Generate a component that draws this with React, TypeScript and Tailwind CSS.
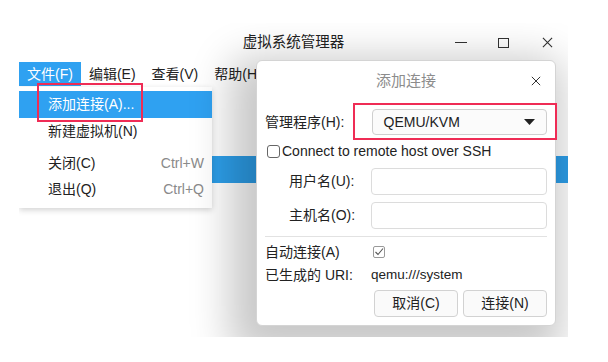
import React from 'react';

const cjk = { fontFamily: '"Liberation Sans", "Noto Sans CJK SC", sans-serif' };

const XIcon = ({ size = 12 }: { size?: number }) => (
  <svg width={size} height={size} viewBox="0 0 12 12" fill="none" stroke="#333" strokeWidth="1.2">
    <path d="M1 1 L11 11 M11 1 L1 11" />
  </svg>
);

const MenuItem = ({ label, shortcut, active }: { label: string; shortcut?: string; active?: boolean }) => (
  <div
    className={`h-[26px] flex items-center justify-between pl-[29px] pr-[8px] ${
      active ? 'bg-[#2fa1f1] text-white h-[27px]' : 'text-[#222]'
    }`}
  >
    <span>{label}</span>
    {shortcut && <span className="text-[#8a8a8a]">{shortcut}</span>}
  </div>
);

const Field = ({ label }: { label: string }) => (
  <div className="flex items-center h-[27px]">
    <span className="w-[106px] pl-[24px]">{label}</span>
    <div className="w-[176px] h-[27px] border border-[#dcdcdc] rounded-[4px] bg-white" />
  </div>
);

export default function App() {
  return (
    <div className="w-[608px] h-[362px] bg-white pt-[23px] pl-[19px] text-[14px] text-[#222]" style={cjk}>
      <div className="relative w-[549px] h-[314px] bg-white overflow-hidden">
        {/* title bar */}
        <div className="h-[39px] flex items-center justify-center relative">
          <span className="text-[14.5px] text-[#222] mt-[1px]">虚拟系统管理器</span>
          <div className="absolute right-0 top-0 h-[39px] flex items-center">
            <div className="w-[43px] flex justify-center">
              <div className="w-[12px] h-[1.5px] bg-[#333]" />
            </div>
            <div className="w-[43px] flex justify-center">
              <div className="w-[11px] h-[10px] border-[1.3px] border-[#333]" />
            </div>
            <div className="w-[43px] flex justify-center pl-[1px]">
              <XIcon size={11} />
            </div>
          </div>
        </div>

        {/* menu bar */}
        <div className="h-[24px] flex items-center">
          <div className="h-[24px] px-[8px] flex items-center bg-[#2fa1f1] text-white">文件(F)</div>
          <div className="h-[24px] px-[8px] flex items-center">编辑(E)</div>
          <div className="h-[24px] px-[8px] flex items-center">查看(V)</div>
          <div className="h-[24px] px-[8px] flex items-center">帮助(H)</div>
        </div>

        {/* main content */}
        <div className="pt-[70px]">
          <div className="h-[27px] bg-[#2d9fea]" />
        </div>

        {/* file menu */}
        <div className="absolute left-0 top-[64px] w-[193px] bg-white pt-[4px] pb-[6px] shadow-[0_2px_6px_rgba(0,0,0,0.18)]">
          <MenuItem label="添加连接(A)..." active />
          <MenuItem label="新建虚拟机(N)" />
          <div className="h-[6px]" />
          <MenuItem label="关闭(C)" shortcut="Ctrl+W" />
          <MenuItem label="退出(Q)" shortcut="Ctrl+Q" />
        </div>

        {/* red highlight on menu */}
        <div className="absolute left-[18px] top-[60px] w-[106px] h-[39px] border-2 border-[#ef2c55] pointer-events-none" />

        {/* dialog */}
        <div className="absolute left-[237px] top-[37px] w-[300px] h-[266px] bg-white rounded-[6px] border border-[#d4d4d4] shadow-[-10px_14px_40px_16px_rgba(0,0,0,0.22)]">
          <div className="h-[40px] flex items-center justify-center relative">
            <span className="text-[15px] text-[#8c8c8c] mt-[1px]">添加连接</span>
            <div className="absolute right-[14px] top-[15px]">
              <XIcon size={10} />
            </div>
          </div>

          <div className="pl-[8px] pr-[8px]">
            {/* hypervisor */}
            <div className="flex items-center h-[26px] mt-[8px]">
              <span className="w-[107px]">管理程序(H):</span>
              <div className="w-[176px] h-[26px] border border-[#cfcfcf] rounded-[4px] bg-[#fbfbfb] flex items-center justify-between pl-[11px] pr-[11px]">
                <span>QEMU/KVM</span>
                <svg width="11" height="6" viewBox="0 0 11 6">
                  <path d="M0 0 L11 0 L5.5 6 Z" fill="#222" />
                </svg>
              </div>
            </div>

            {/* ssh */}
            <div className="flex items-center h-[20px] mt-[6px] pl-[2px]">
              <div className="w-[13px] h-[13px] border border-[#666] rounded-[3px] bg-white mr-[2px]" />
              <span>Connect to remote host over SSH</span>
            </div>

            <div className="mt-[7px] flex flex-col gap-[7px]">
              <Field label="用户名(U):" />
              <Field label="主机名(O):" />
            </div>

            <div className="h-px bg-[#e2e2e2] mt-[7px]" />

            <div className="flex items-center h-[20px] mt-[5px]">
              <span className="w-[108px]">自动连接(A)</span>
              <svg width="12" height="12" viewBox="0 0 12 12" fill="none">
                <rect x="0.5" y="0.5" width="11" height="11" rx="1.5" stroke="#9a9a9a" />
                <path d="M2.5 6 L5 8.5 L10 2.5" stroke="#555" strokeWidth="1.1" />
              </svg>
            </div>

            <div className="flex items-center h-[20px] mt-[3px]">
              <span className="w-[106px]">已生成的 URI:</span>
              <span className="text-[13.5px]">qemu:///system</span>
            </div>

            <div className="flex justify-end gap-[5px] mt-[5px]">
              <div className="w-[84px] h-[27px] border border-[#d2d2d2] rounded-[4px] bg-[#fafafa] flex items-center justify-center">
                取消(C)
              </div>
              <div className="w-[84px] h-[27px] border border-[#d2d2d2] rounded-[4px] bg-[#fafafa] flex items-center justify-center">
                连接(N)
              </div>
            </div>
          </div>
        </div>

        {/* red highlight on select */}
        <div className="absolute left-[334px] top-[80px] w-[204px] h-[37px] border-2 border-[#ef2c55] pointer-events-none" />
      </div>
    </div>
  );
}
